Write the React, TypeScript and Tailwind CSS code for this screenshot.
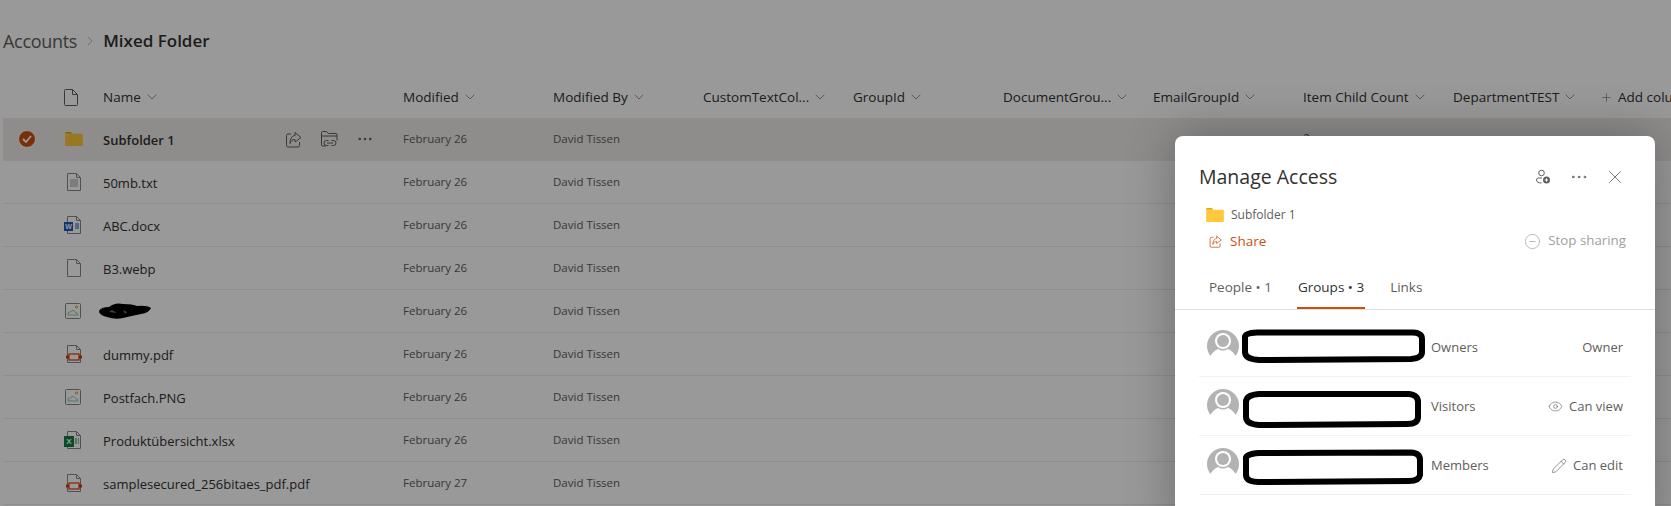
import { ChevronDown, ChevronRight, Ellipsis, Eye, MinusCircle, Pencil, Plus, X } from 'lucide-react'

const font = "font-['Open_Sans','Noto_Sans',sans-serif]"

const columns = [
  'Modified By',
  'CustomTextCol...',
  'GroupId',
  'DocumentGrou...',
  'EmailGroupId',
  'Item Child Count',
  'DepartmentTEST',
]

const files = [
  { name: 'Subfolder 1', icon: 'folder', date: 'February 26', selected: true },
  { name: '50mb.txt', icon: 'txt', date: 'February 26' },
  { name: 'ABC.docx', icon: 'word', date: 'February 26' },
  { name: 'B3.webp', icon: 'blank', date: 'February 26' },
  { name: '', icon: 'image', date: 'February 26', scribble: true },
  { name: 'dummy.pdf', icon: 'pdf', date: 'February 26' },
  { name: 'Postfach.PNG', icon: 'image', date: 'February 26' },
  { name: 'Produktübersicht.xlsx', icon: 'excel', date: 'February 26' },
  { name: 'samplesecured_256bitaes_pdf.pdf', icon: 'pdf', date: 'February 27' },
]

const groups = [
  { suffix: 'Owners', role: 'Owner', icon: null, box: 'M4 9 Q3 4 16 3.500 L172 3.500 Q181 4 181 10 L181 23 Q181 29 170 30 L18 31 Q4 30 4 23 Z' },
  { suffix: 'Visitors', role: 'Can view', icon: 'eye', box: 'M5 14 Q5 7 18 6 L168 6 Q177 7 177 14 L177 29 Q177 36 166 36 L18 37 Q5 36 5 29 Z' },
  { suffix: 'Members', role: 'Can edit', icon: 'edit', box: 'M5 12 Q4 7 18 6 L170 5.500 Q179 6 179 13 L179 28 Q178 34 168 34 L18 35 Q5 35 5 28 Z' },
]

function DocShape({ children, lines }: { children?: React.ReactNode; lines?: boolean }) {
  return (
    <svg width="20" height="20" viewBox="0 0 20 20" fill="none">
      <path d="M3.500 1.500h9l4 4v13h-13z" fill="#fff" stroke="#8a8886" />
      <path d="M12.500 1.500v4h4" stroke="#8a8886" />
      {lines && <path d="M6 8h8M6 10h8M6 12h8M6 14h8" stroke="#a19f9d" />}
      {children}
    </svg>
  )
}

function FileIcon({ type }: { type: string }) {
  if (type === 'folder') {
    return (
      <svg width="18" height="14" viewBox="0 0 19 15" className="ml-[1px]">
        <path d="M0 1a1 1 0 0 1 1-1h5l2 2h-8z" fill="#e8a500" />
        <path d="M0 2h18a1 1 0 0 1 1 1v11a1 1 0 0 1-1 1H1a1 1 0 0 1-1-1z" fill="#ffc83d" />
      </svg>
    )
  }
  if (type === 'txt') return <DocShape lines />
  if (type === 'blank') return <DocShape />
  if (type === 'word') {
    return (
      <DocShape>
        <path d="M11 9h4M11 11h4M11 13h4" stroke="#185abd" />
        <rect x="0" y="7" width="9" height="9" fill="#185abd" />
        <text x="4.500" y="14" textAnchor="middle" fontSize="7" fontWeight="700" fill="#fff" fontFamily="Liberation Sans">W</text>
      </DocShape>
    )
  }
  if (type === 'excel') {
    return (
      <DocShape>
        <path d="M11 9h4M11 11h4M11 13h4" stroke="#107c41" strokeDasharray="2 1" />
        <rect x="0" y="6" width="10" height="11" fill="#107c41" />
        <text x="5" y="14" textAnchor="middle" fontSize="8" fontWeight="700" fill="#fff" fontFamily="Liberation Sans">X</text>
      </DocShape>
    )
  }
  if (type === 'pdf') {
    return (
      <DocShape>
        <rect x="5" y="10" width="10" height="6" fill="#fff" stroke="#d83b01" strokeWidth="1.200" />
        <rect x="2" y="11.500" width="3" height="3" fill="#d83b01" />
        <rect x="15" y="11.500" width="3" height="3" fill="#d83b01" />
      </DocShape>
    )
  }
  return (
    <svg width="18" height="18" viewBox="0 0 18 18" fill="none">
      <rect x="1.500" y="1.500" width="15" height="15" rx="1" fill="#fff" stroke="#8a8886" />
      <path d="M4 13v-2q1-1.500 2.500-1 1-2 3-1.500 1.500.5 2 2 2 0 2.500 2.500z" stroke="#8fc1a9" fill="none" />
      <circle cx="12.500" cy="5" r="1.100" stroke="#eaa300" />
    </svg>
  )
}

function ShareIcon({ size }: { size: number }) {
  return (
    <svg width={size} height={size} viewBox="0 0 17 17" fill="none" stroke="currentColor">
      <path d="M6 3H3a1.500 1.500 0 0 0-1.500 1.500v10A1.500 1.500 0 0 0 3 16h10a1.500 1.500 0 0 0 1.500-1.500V11" />
      <path d="M10 1.500l6 5-6 4.500V8.500c-3 0-4 1.500-5 4 0-4.500 2-8 5-8z" strokeLinejoin="round" />
    </svg>
  )
}

function FolderLinkIcon() {
  return (
    <svg width="18" height="18" viewBox="0 0 18 18" fill="none" stroke="#605e5c">
      <path d="M6 16H2.500a1 1 0 0 1-1-1V2.500a1 1 0 0 1 1-1h4l2 2h7.500a1 1 0 0 1 1 1v6M1.500 6h15.500" />
      <path d="M8.500 10.500H6.500a2.500 2.500 0 0 0 0 5h2M11.500 10.500h2a2.500 2.500 0 0 1 0 5h-2M7 13h6" />
    </svg>
  )
}

function Avatar() {
  return (
    <svg width="32" height="32" viewBox="0 0 32 32" className="shrink-0 -mt-[3px]">
      <circle cx="16" cy="16" r="16" fill="#b3b3b3" />
      <circle cx="16" cy="11" r="8" fill="#fff" />
      <circle cx="16" cy="11" r="6" fill="#b3b3b3" />
      <path d="M2 28Q6 21 11 19 16 22 21 19 26 21 30 28L30 32 2 32Z" fill="#fff" />
    </svg>
  )
}

function AddPersonIcon() {
  return (
    <svg width="16" height="16" viewBox="0 0 16 16" fill="none" stroke="#605e5c">
      <circle cx="6.500" cy="4" r="2.800" />
      <path d="M7 9H3.500A2 2 0 0 0 1.500 11c0 2 2 3 5 3" />
      <circle cx="11.500" cy="11" r="3.500" fill="#605e5c" stroke="none" />
      <path d="M11.500 9.300v3.400M9.800 11h3.400" stroke="#fff" />
    </svg>
  )
}

function HeaderCell({ label, width }: { label: string; width: string }) {
  return (
    <div className={`${width} shrink-0 flex items-center gap-[3px] text-[13.5px] font-medium text-[#323130]`}>
      <span>{label}</span>
      <ChevronDown className="w-[16px] h-[16px] text-[#605e5c]" strokeWidth={1} />
    </div>
  )
}

function Row({ file }: { file: (typeof files)[number] }) {
  return (
    <div className={`h-[43px] flex items-center border-b ${file.selected ? 'bg-[#edebe9] border-[#edebe9]' : 'border-[#edebe9]'}`}>
      <div className="w-[61px] shrink-0 pl-[15px]">
        {file.selected && (
          <div className="w-[18px] h-[18px] rounded-full bg-[#ca5010] border border-white flex items-center justify-center">
            <svg width="10" height="8" viewBox="0 0 10 8" fill="none">
              <path d="M1 4l3 3 5-6" stroke="#fff" strokeWidth="1.800" />
            </svg>
          </div>
        )}
      </div>
      <div className="w-[39px] shrink-0 flex items-center">
        <FileIcon type={file.icon} />
      </div>
      <div className="w-[300px] shrink-0 flex items-center justify-between pr-[20px]">
        <span className={`pt-[3px] text-[13px] text-[#323130] ${file.selected ? 'font-semibold' : ''}`}>{file.name}</span>
        {file.scribble && (
          <svg width="56" height="20" viewBox="0 0 56 20" className="-ml-[6px] mr-auto">
            <path d="M2 10Q4 6 12 6 18 1 26 3 36 3 40 5 50 4 54 7 52 12 44 13 34 15 26 17 18 19 10 16 2 14 2 10Z" fill="#000" />
            <path d="M12 11l8 1-5-3zM26 9l4 2-2 2z" fill="#6e6e6e" />
          </svg>
        )}
        {file.selected && (
          <div className="flex items-center text-[#605e5c]">
            <div className="w-[36px] flex justify-center"><ShareIcon size={17} /></div>
            <div className="w-[36px] flex justify-center"><FolderLinkIcon /></div>
            <div className="w-[36px] flex justify-center"><Ellipsis className="w-[18px] h-[18px]" strokeWidth={1.5} /></div>
          </div>
        )}
      </div>
      <div className="w-[150px] shrink-0 text-[11.5px] text-[#605e5c]">{file.date}</div>
      <div className="w-[750px] shrink-0 text-[11.5px] text-[#605e5c]">David Tissen</div>
      {file.selected && <div className="text-xs text-[#605e5c]">2</div>}
    </div>
  )
}

export default function App() {
  return (
    <div className={`relative w-[1671px] h-[506px] overflow-hidden bg-white ${font}`}>
      <div className="pl-[3px]">
        <div className="h-[82px] flex items-center gap-[5px]">
          <span className="text-[18px] tracking-[-0.3px] text-[#605e5c]">Accounts</span>
          <ChevronRight className="w-[16px] h-[16px] text-[#a19f9d]" strokeWidth={1} />
          <span className="text-[17px] font-semibold text-[#323130]">Mixed Folder</span>
        </div>
        <div className="h-[36px] pb-[6px] flex items-center">
          <div className="w-[61px] shrink-0" />
          <div className="w-[39px] shrink-0">
            <svg width="14" height="17" viewBox="0 0 14 17" fill="none" stroke="#605e5c">
              <path d="M1.500.5h7l5 5v10a1 1 0 0 1-1 1h-11a1 1 0 0 1-1-1v-14a1 1 0 0 1 1-1z" />
              <path d="M8.500.5v5h5" />
            </svg>
          </div>
          <HeaderCell label="Name" width="w-[300px]" />
          <HeaderCell label="Modified" width="w-[150px]" />
          {columns.map((label) => (
            <HeaderCell key={label} label={label} width="w-[150px]" />
          ))}
          <div className="-ml-[3px] flex items-center gap-[5px] text-[13.5px] font-medium text-[#323130] whitespace-nowrap">
            <Plus className="w-[13px] h-[13px] text-[#605e5c]" strokeWidth={1} />
            Add column
          </div>
        </div>
        {files.map((file) => (
          <Row key={file.date + file.name} file={file} />
        ))}
      </div>

      {/* dimmed layer behind the panel */}
      <div className="absolute inset-0 bg-black/40" />

      <div className="absolute left-[1175px] top-[136px] w-[480px] h-[400px] bg-white rounded-lg shadow-[0_0_50px_rgba(0,0,0,0.3)] pt-[21px]">
        <div className="h-[40px] pl-[24px] pr-[22px] flex items-center justify-between">
          <h1 className="text-[19.5px] font-medium text-[#323130]">Manage Access</h1>
          <div className="flex items-center text-[#605e5c]">
            <div className="w-[36px] flex justify-center"><AddPersonIcon /></div>
            <div className="w-[36px] flex justify-center"><Ellipsis className="w-[20px] h-[20px]" strokeWidth={1.2} /></div>
            <div className="w-[36px] flex justify-center"><X className="w-[22px] h-[22px]" strokeWidth={0.9} /></div>
          </div>
        </div>
        <div className="mt-[6px] h-[24px] pl-[30px] flex items-center gap-[7px] text-xs text-[#605e5c]">
          <FileIcon type="folder" />
          Subfolder 1
        </div>
        <div className="h-[28px] pl-[34px] pr-[29px] mb-[1px] flex items-center justify-between">
          <div className="flex items-center gap-[8px] text-[13.5px] text-[#ca5010]">
            <ShareIcon size={13} />
            Share
          </div>
          <div className="flex items-center gap-[7px] text-[13.3px] text-[#a19f9d]">
            <MinusCircle className="w-[17px] h-[17px]" strokeWidth={1} />
            Stop sharing
          </div>
        </div>
        <div className="mt-[9px] h-[46px] pl-[34px] flex items-stretch gap-[25px] border-b border-[#e1dfdd] text-[13.5px] text-[#605e5c]">
          <div className="flex items-center pt-[1px]">People • 1</div>
          <div className="relative flex items-center pt-[1px] font-medium text-[#323130] px-[1px]">
            Groups • 3
            <div className="absolute left-0 right-0 bottom-0 h-[2px] bg-[#ca5010]" />
          </div>
          <div className="flex items-center pt-[1px]">Links</div>
        </div>
        <div className="mx-[24px] mt-[8px]">
          {groups.map((group) => (
            <div key={group.suffix} className="h-[59px] pl-[8px] pr-[8px] flex items-center border-b border-[#f3f2f1] text-[13px] text-[#605e5c]">
              <Avatar />
              <svg width="186" height="36" viewBox="0 0 186 36" fill="none" className="ml-[2px] -mt-[1px] shrink-0 overflow-visible">
                <path d={group.box} stroke="#000" strokeWidth="6" />
              </svg>
              <span className="ml-[4px] pt-[1px]">{group.suffix}</span>
              <span className="ml-auto pt-[1px] flex items-center gap-[6px]">
                {group.icon === 'eye' && <Eye className="w-[15px] h-[15px]" strokeWidth={1} />}
                {group.icon === 'edit' && <Pencil className="w-[16px] h-[16px]" strokeWidth={1} />}
                {group.role}
              </span>
            </div>
          ))}
        </div>
      </div>
    </div>
  )
}
